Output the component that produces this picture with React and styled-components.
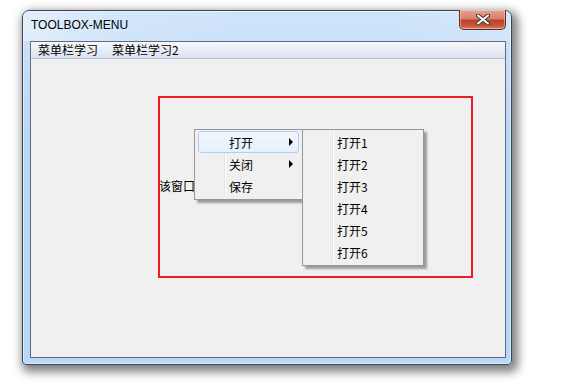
import styled, { createGlobalStyle } from 'styled-components'

const Global = createGlobalStyle`
  html, body {
    margin: 0;
    background: #fff;
  }
  body {
    font-family: "Noto Sans CJK SC", "Liberation Sans", sans-serif;
    font-size: 12px;
    color: #000;
  }
`

const Desk = styled.div`
  padding: 10px 0 0 22px;
  height: 383px;
  box-sizing: border-box;
`

const Window = styled.div`
  width: 490px;
  height: 355px;
  box-sizing: border-box;
  border: 1px solid #3a4656;
  border-radius: 7px 7px 4px 4px;
  padding: 0 5px 6px 7px;
  display: flex;
  flex-direction: column;
  background: linear-gradient(180deg, #cfe4f9 0%, #c2dcf8 20%, #b9d7f6 35%, #b9d7f6 100%);
  box-shadow: 3px 4px 10px 3px rgba(0, 0, 0, 0.5), inset 0 0 0 1px rgba(255, 255, 255, 0.5);
`

const TitleBar = styled.div`
  height: 30px;
  display: flex;
  align-items: flex-start;
  justify-content: space-between;
  margin: 0 -5px 0 -7px;
  padding-left: 8px;
  background: linear-gradient(90deg, rgba(235,243,252,0.7) 0%, rgba(220,234,250,0.35) 20%, rgba(185,216,248,0) 45%, rgba(185,216,248,0) 75%, rgba(225,238,252,0.35) 100%);
  border-radius: 6px 6px 0 0;
`

const Title = styled.span`
  font-family: "Liberation Sans", "Noto Sans", sans-serif;
  font-size: 12px;
  line-height: 28px;
  color: #000;
`

const CloseButton = styled.div`
  width: 47px;
  height: 20px;
  margin: -1px 5px 0 0;
  box-sizing: border-box;
  border: 1px solid #6b2b22;
  border-top: none;
  border-radius: 0 0 5px 5px;
  background: linear-gradient(180deg, #e5a594 0%, #d7806a 45%, #c0412b 55%, #c8573f 85%, #d98a72 100%);
  display: flex;
  align-items: center;
  justify-content: center;
  box-shadow: inset 0 0 0 1px rgba(255, 220, 210, 0.45);
`

const Client = styled.div`
  flex: 1;
  position: relative;
  border: 1px solid #5f6d80;
  background: #f0f0f0;
  display: flex;
  flex-direction: column;
`

const MenuBar = styled.div`
  height: 16px;
  display: flex;
  align-items: center;
  padding-left: 7px;
  gap: 14px;
  background: linear-gradient(180deg, #f7f8fc 0%, #eaedf6 45%, #dce2ef 100%);
  border-bottom: 1px solid #b8c2d6;
`

const MenuBarItem = styled.span`
  line-height: 16px;
`

const Body = styled.div`
  flex: 1;
  padding: 37px 0 0 127px;
`

const Panel = styled.div`
  width: 315px;
  height: 182px;
  box-sizing: border-box;
  border: 2px solid #ec1c24;
  padding-top: 79px;
`

const Label = styled.span`
  display: inline-block;
  margin-left: -1px;
  line-height: 14px;
`

const Menu = styled.div`
  position: absolute;
  left: ${p => p.$left}px;
  top: ${p => p.$top}px;
  width: ${p => p.$width}px;
  box-sizing: border-box;
  padding: 1px 3px 2px;
  border: 1px solid #979797;
  background: #f0f0f0;
  box-shadow: 3px 3px 2px rgba(0, 0, 0, 0.35);

  &::before {
    content: '';
    position: absolute;
    left: 29px;
    top: 2px;
    bottom: 2px;
    width: 1px;
    background: #e2e3e3;
    border-right: 1px solid #fff;
  }
`

const MenuItem = styled.div`
  position: relative;
  height: 22px;
  box-sizing: border-box;
  display: flex;
  align-items: center;
  padding-left: 30px;
  border: 1px solid ${p => (p.$active ? '#aecff7' : 'transparent')};
  border-radius: 3px;
  background: ${p => (p.$active ? 'linear-gradient(180deg, #f2f7fd 0%, #e6effb 100%)' : 'transparent')};
`

const Arrow = styled.span`
  position: absolute;
  right: 5px;
  top: 6px;
  width: 0;
  height: 0;
  border-top: 4px solid transparent;
  border-bottom: 4px solid transparent;
  border-left: 4px solid #000;
`

const XIcon = () => (
  <svg width="14" height="11" viewBox="0 0 14 11">
    <path d="M2 1.5 L12 9.5 M12 1.5 L2 9.5" stroke="#3b3b3b" strokeWidth="4" strokeLinecap="round" />
    <path d="M2 1.5 L12 9.5 M12 1.5 L2 9.5" stroke="#fff" strokeWidth="2" strokeLinecap="round" />
  </svg>
)

const mainItems = [
  { text: '打开', sub: true, active: true },
  { text: '关闭', sub: true },
  { text: '保存' },
]

const subItems = ['打开1', '打开2', '打开3', '打开4', '打开5', '打开6']

export default function App() {
  return (
    <>
      <Global />
      <Desk>
        <Window>
          <TitleBar>
            <Title>TOOLBOX-MENU</Title>
            <CloseButton><XIcon /></CloseButton>
          </TitleBar>
          <Client>
            <MenuBar>
              <MenuBarItem>菜单栏学习</MenuBarItem>
              <MenuBarItem>菜单栏学习2</MenuBarItem>
            </MenuBar>
            <Body>
              <Panel>
                <Label>该窗口</Label>
              </Panel>
            </Body>
            <Menu $left={163} $top={87} $width={109}>
              {mainItems.map(item => (
                <MenuItem key={item.text} $active={item.active}>
                  {item.text}
                  {item.sub && <Arrow />}
                </MenuItem>
              ))}
            </Menu>
            <Menu $left={271} $top={87} $width={122}>
              {subItems.map(text => (
                <MenuItem key={text}>{text}</MenuItem>
              ))}
            </Menu>
          </Client>
        </Window>
      </Desk>
    </>
  )
}
